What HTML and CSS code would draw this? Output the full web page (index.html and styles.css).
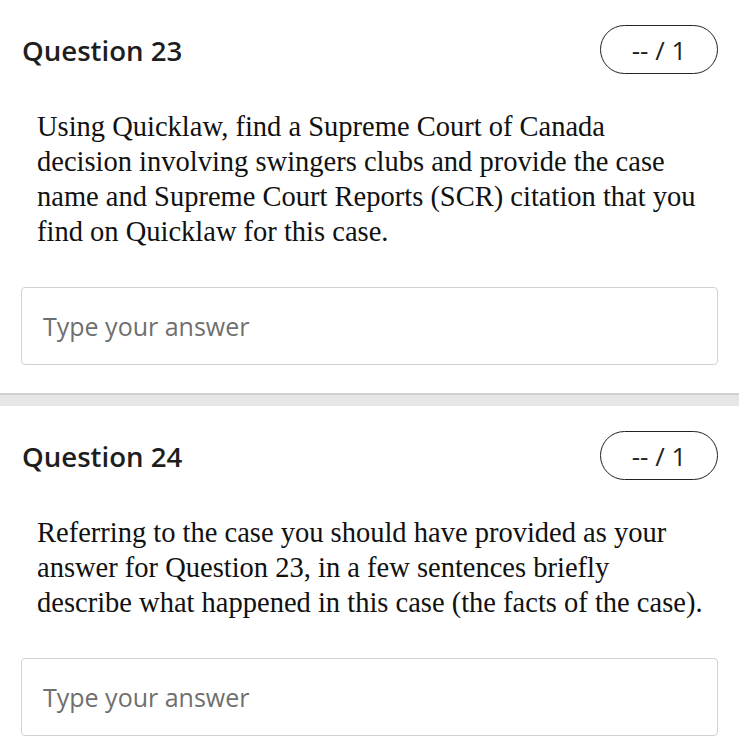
FILE: index.html
```html
<!DOCTYPE html>
<html>
<head>
<meta charset="utf-8">
<link rel="stylesheet" href="styles.css">
</head>
<body>
<section class="question">
  <div class="q-head">
    <h2 class="q-title">Question 23</h2>
    <div class="q-score">-- / 1</div>
  </div>
  <p class="q-text">Using Quicklaw, find a Supreme Court of Canada decision involving swingers clubs and provide the case name and Supreme Court Reports (SCR) citation that you find on Quicklaw for this case.</p>
  <div class="q-answer">Type your answer</div>
</section>
<div class="divider"></div>
<section class="question">
  <div class="q-head">
    <h2 class="q-title">Question 24</h2>
    <div class="q-score">-- / 1</div>
  </div>
  <p class="q-text">Referring to the case you should have provided as your answer for Question 23, in a few sentences briefly describe what happened in this case (the facts of the case).</p>
  <div class="q-answer">Type your answer</div>
</section>
</body>
</html>
```

FILE: styles.css
```css
html, body {
  margin: 0;
  padding: 0;
  background: #fff;
}
body {
  width: 739px;
  font-family: "Open Sans", sans-serif;
  color: #222;
}
.question {
  padding: 25px 21px 28px 21px;
}
.q-head {
  display: flex;
  justify-content: space-between;
  align-items: center;
}
.q-title {
  margin: 0 0 0 1px;
  font-size: 27.6px;
  font-weight: 600;
  color: #1e1e1e;
  line-height: 48px;
}
.q-score {
  box-sizing: border-box;
  width: 118px;
  height: 49px;
  border: 1.5px solid #222;
  border-radius: 25px;
  display: flex;
  align-items: center;
  justify-content: center;
  font-size: 26px;
  color: #222;
}
.q-text {
  margin: 35px 0 0 16px;
  font-family: "Liberation Serif", serif;
  font-size: 28.5px;
  line-height: 35px;
  color: #111;
  width: 670px;
}
.q-answer {
  box-sizing: border-box;
  margin-top: 38px;
  height: 78px;
  border: 1.5px solid #d2d2d2;
  border-radius: 4px;
  padding-left: 21px;
  display: flex;
  align-items: center;
  font-size: 25px;
  color: #6f6f6f;
}
.divider {
  height: 11px;
  background: #e6e6e6;
  border-top: 2px solid #d0d0d0;
}
```
